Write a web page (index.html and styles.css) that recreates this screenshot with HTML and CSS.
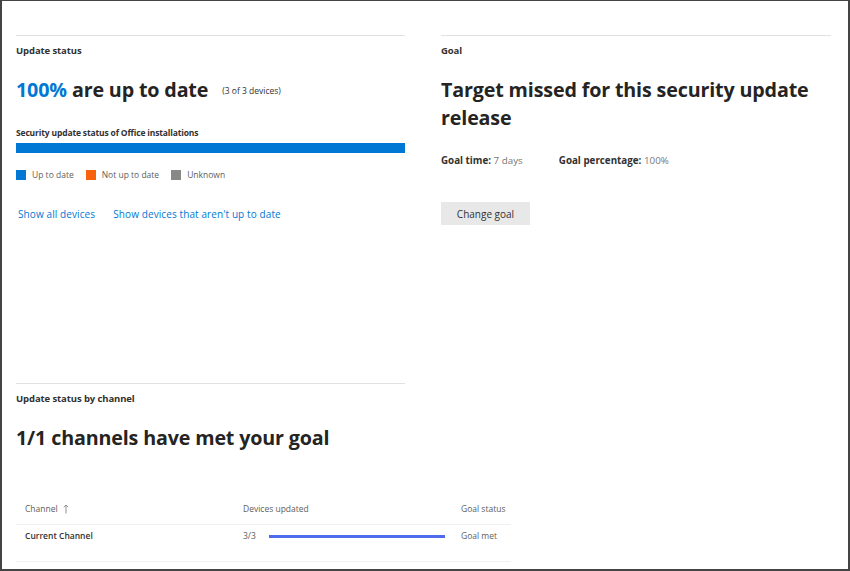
FILE: index.html
```html
<!DOCTYPE html>
<html lang="en">
<head>
<meta charset="utf-8">
<title>Security updates</title>
<link rel="stylesheet" href="styles.css">
</head>
<body>
<div class="frame">
  <div class="grid">
    <section class="card card-status">
      <div class="label">Update status</div>
      <h1 class="headline"><span class="accent">100%</span> are up to date <span class="count">(3 of 3 devices)</span></h1>
      <div class="sublabel">Security update status of Office installations</div>
      <div class="bar"><div class="bar-fill" style="width:100%"></div></div>
      <div class="legend">
        <span class="legend-item"><span class="swatch swatch-blue"></span>Up to date</span>
        <span class="legend-item"><span class="swatch swatch-orange"></span>Not up to date</span>
        <span class="legend-item"><span class="swatch swatch-grey"></span>Unknown</span>
      </div>
      <div class="links">
        <a class="link" href="#">Show all devices</a>
        <a class="link" href="#">Show devices that aren't up to date</a>
      </div>
    </section>
    <section class="card card-goal">
      <div class="label">Goal</div>
      <h1 class="headline">Target missed for this security update release</h1>
      <div class="meta">
        <span class="meta-item"><b>Goal time:</b> 7 days</span>
        <span class="meta-item"><b>Goal percentage:</b> 100%</span>
      </div>
      <button class="button" type="button">Change goal</button>
    </section>
    <section class="card card-channel">
      <div class="label">Update status by channel</div>
      <h1 class="headline">1/1 channels have met your goal</h1>
      <div class="table">
        <div class="row row-head">
          <div class="cell c1">Channel <svg class="arrow" width="6" height="10" viewBox="0 0 6 10" aria-hidden="true"><path d="M3 9.5V1M0.8 3.2L3 1l2.2 2.2" fill="none" stroke="#8a8886" stroke-width="0.9"/></svg></div>
          <div class="cell c2">Devices updated</div>
          <div class="cell c3">Goal status</div>
        </div>
        <div class="row row-body">
          <div class="cell c1 strong">Current Channel</div>
          <div class="cell c2"><span class="frac">3/3</span><span class="mini-bar"><span class="mini-fill" style="width:100%"></span></span></div>
          <div class="cell c3">Goal met</div>
        </div>
      </div>
    </section>
  </div>
</div>
</body>
</html>
```
FILE: styles.css
```css
* { box-sizing: border-box; }
html, body { margin: 0; padding: 0; background: #fff; }
body {
  font-family: "Open Sans", "Noto Sans", "Liberation Sans", sans-serif;
  color: #323130;
}
.frame {
  width: 850px;
  height: 571px;
  border-style: solid;
  border-color: #444;
  border-width: 1px 2px 2px 2px;
  padding: 34px 17px 0 14px;
  overflow: hidden;
}
.grid {
  display: grid;
  grid-template-columns: 389px 390px;
  column-gap: 36px;
  grid-template-rows: 348px auto;
}
.card {
  border-top: 1px solid #e1e1e1;
}
.card-channel { grid-column: 1; grid-row: 2; }
.label {
  margin-top: 8px;
  font-size: 9.5px;
  line-height: 14px;
  font-weight: 700;
  color: #323130;
  letter-spacing: -0.1px;
}
.headline {
  margin: 18px 0 0;
  font-size: 19.7px;
  line-height: 28px;
  font-weight: 700;
  color: #252423;
  letter-spacing: -0.15px;
}
.accent { color: #0078d4; }
.count {
  font-size: 8.5px;
  font-weight: 400;
  color: #323130;
  margin-left: 9px;
  vertical-align: 3px;
  letter-spacing: 0;
}
.sublabel {
  margin-top: 21px;
  font-size: 8.5px;
  line-height: 14px;
  font-weight: 700;
  letter-spacing: -0.15px;
}
.bar {
  margin-top: 3px;
  height: 10px;
  background: #e1e1e1;
}
.bar-fill { height: 100%; background: #0078d4; }
.legend {
  margin-top: 17px;
  display: flex;
  gap: 12px;
  font-size: 8.5px;
  line-height: 10px;
  color: #605e5c;
}
.legend-item { display: flex; align-items: center; gap: 6px; }
.swatch { width: 10px; height: 10px; display: inline-block; }
.swatch-blue { background: #0078d4; }
.swatch-orange { background: #f7630c; }
.swatch-grey { background: #8a8886; }
.links {
  margin-top: 27px;
  padding-left: 2px;
  display: flex;
  gap: 18px;
  font-size: 10px;
  line-height: 14px;
  letter-spacing: 0.1px;
}
.link { color: #0078d4; text-decoration: none; }
.meta {
  margin-top: 22px;
  display: flex;
  gap: 36px;
  font-size: 9.8px;
  line-height: 14px;
  color: #797775;
}
.meta b { color: #323130; font-weight: 700; }
.button {
  margin-top: 34px;
  display: block;
  width: 89px;
  height: 23px;
  border: none;
  background: #e8e8e8;
  font-family: inherit;
  font-size: 10px;
  color: #323130;
  padding: 0;
}
.table {
  margin-top: 41px;
  width: 495px;
}
.row { display: flex; }
.row-head {
  height: 32px;
  align-items: center;
  border-bottom: 1px solid #f0f0f0;
  font-size: 8.5px;
  color: #605e5c;
}
.row-body {
  height: 37px;
  padding-top: 4px;
  border-bottom: 1px solid #f0f0f0;
  font-size: 8.5px;
  line-height: 14px;
  color: #605e5c;
}
.cell.c1 { width: 227px; padding-left: 9px; display: flex; align-items: center; gap: 5px; }
.row-body .cell.c1 { display: block; }
.cell.c2 { width: 218px; display: flex; align-items: center; height: 14px; }
.row-head .cell.c2 { height: auto; }
.cell.c3 { flex: 1; }
.strong { font-weight: 600; color: #323130; }
.arrow { display: block; }
.frac { width: 26px; }
.mini-bar { display: block; width: 176px; height: 3px; background: #e1e1e1; }
.mini-fill { display: block; height: 100%; background: #4f6bed; }
```
